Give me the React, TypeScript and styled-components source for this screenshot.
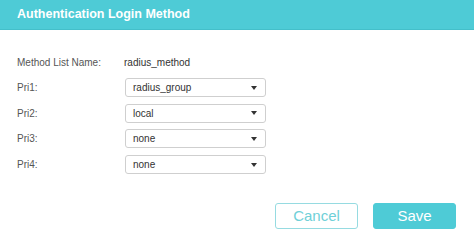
import React from "react";
import styled, { createGlobalStyle } from "styled-components";

const Global = createGlobalStyle`
  html, body { margin: 0; padding: 0; background: #ffffff; overflow: hidden; }
  body { font-family: "Liberation Sans", Arial, sans-serif; }
`;

const Dialog = styled.div`
  width: 474px;
  height: 249px;
  background: #ffffff;
  display: flex;
  flex-direction: column;
  overflow: hidden;
`;

const Header = styled.div`
  height: 29px;
  flex: none;
  background: #4ecbd6;
  border-bottom: 1px solid #44bfca;
  display: flex;
  align-items: center;
  padding-left: 17px;
  box-sizing: content-box;
`;

const Title = styled.div`
  color: #ffffff;
  font-size: 12.5px;
  font-weight: bold;
  line-height: 1;
`;

const Form = styled.div`
  display: grid;
  grid-template-columns: 107px 142px;
  grid-auto-rows: 20px;
  row-gap: 5.67px;
  padding: 22px 0 0 17px;
  align-items: center;
`;

const Label = styled.div`
  font-size: 10px;
  color: #555555;
`;

const Value = styled.div`
  font-size: 10px;
  color: #333333;
`;

const Select = styled.div`
  height: 19px;
  border: 1px solid #cfcfcf;
  border-radius: 3px;
  box-sizing: border-box;
  margin-left: 1px;
  display: flex;
  align-items: center;
  justify-content: space-between;
  padding: 0 8px 0 7px;
  font-size: 10px;
  color: #333333;
  background: #ffffff;
`;

const Caret = styled.span`
  width: 0;
  height: 0;
  border-left: 3.5px solid transparent;
  border-right: 3.5px solid transparent;
  border-top: 4px solid #333333;
`;

const Actions = styled.div`
  display: flex;
  justify-content: flex-end;
  gap: 15px;
  padding: 0 18px 0 0;
  margin-top: 28px;
`;

const Button = styled.button<{ $primary?: boolean }>`
  width: 83px;
  height: 26px;
  border-radius: 3px;
  box-sizing: border-box;
  font-family: "Liberation Sans", Arial, sans-serif;
  font-size: 15px;
  padding: 0;
  cursor: pointer;
  border: 1px solid ${(p) => (p.$primary ? "#4ecbd6" : "#96dbe1")};
  background: ${(p) => (p.$primary ? "#4ecbd6" : "#ffffff")};
  color: ${(p) => (p.$primary ? "#ffffff" : "#6fd0d8")};
`;

const rows = [
  { label: "Pri1:", value: "radius_group" },
  { label: "Pri2:", value: "local" },
  { label: "Pri3:", value: "none" },
  { label: "Pri4:", value: "none" },
];

export default function App() {
  return (
    <>
      <Global />
      <Dialog>
        <Header>
          <Title>Authentication Login Method</Title>
        </Header>
        <Form>
          <Label>Method List Name:</Label>
          <Value>radius_method</Value>
          {rows.map((r) => (
            <React.Fragment key={r.label}>
              <Label>{r.label}</Label>
              <Select>
                <span>{r.value}</span>
                <Caret />
              </Select>
            </React.Fragment>
          ))}
        </Form>
        <Actions>
          <Button>Cancel</Button>
          <Button $primary>Save</Button>
        </Actions>
      </Dialog>
    </>
  );
}
